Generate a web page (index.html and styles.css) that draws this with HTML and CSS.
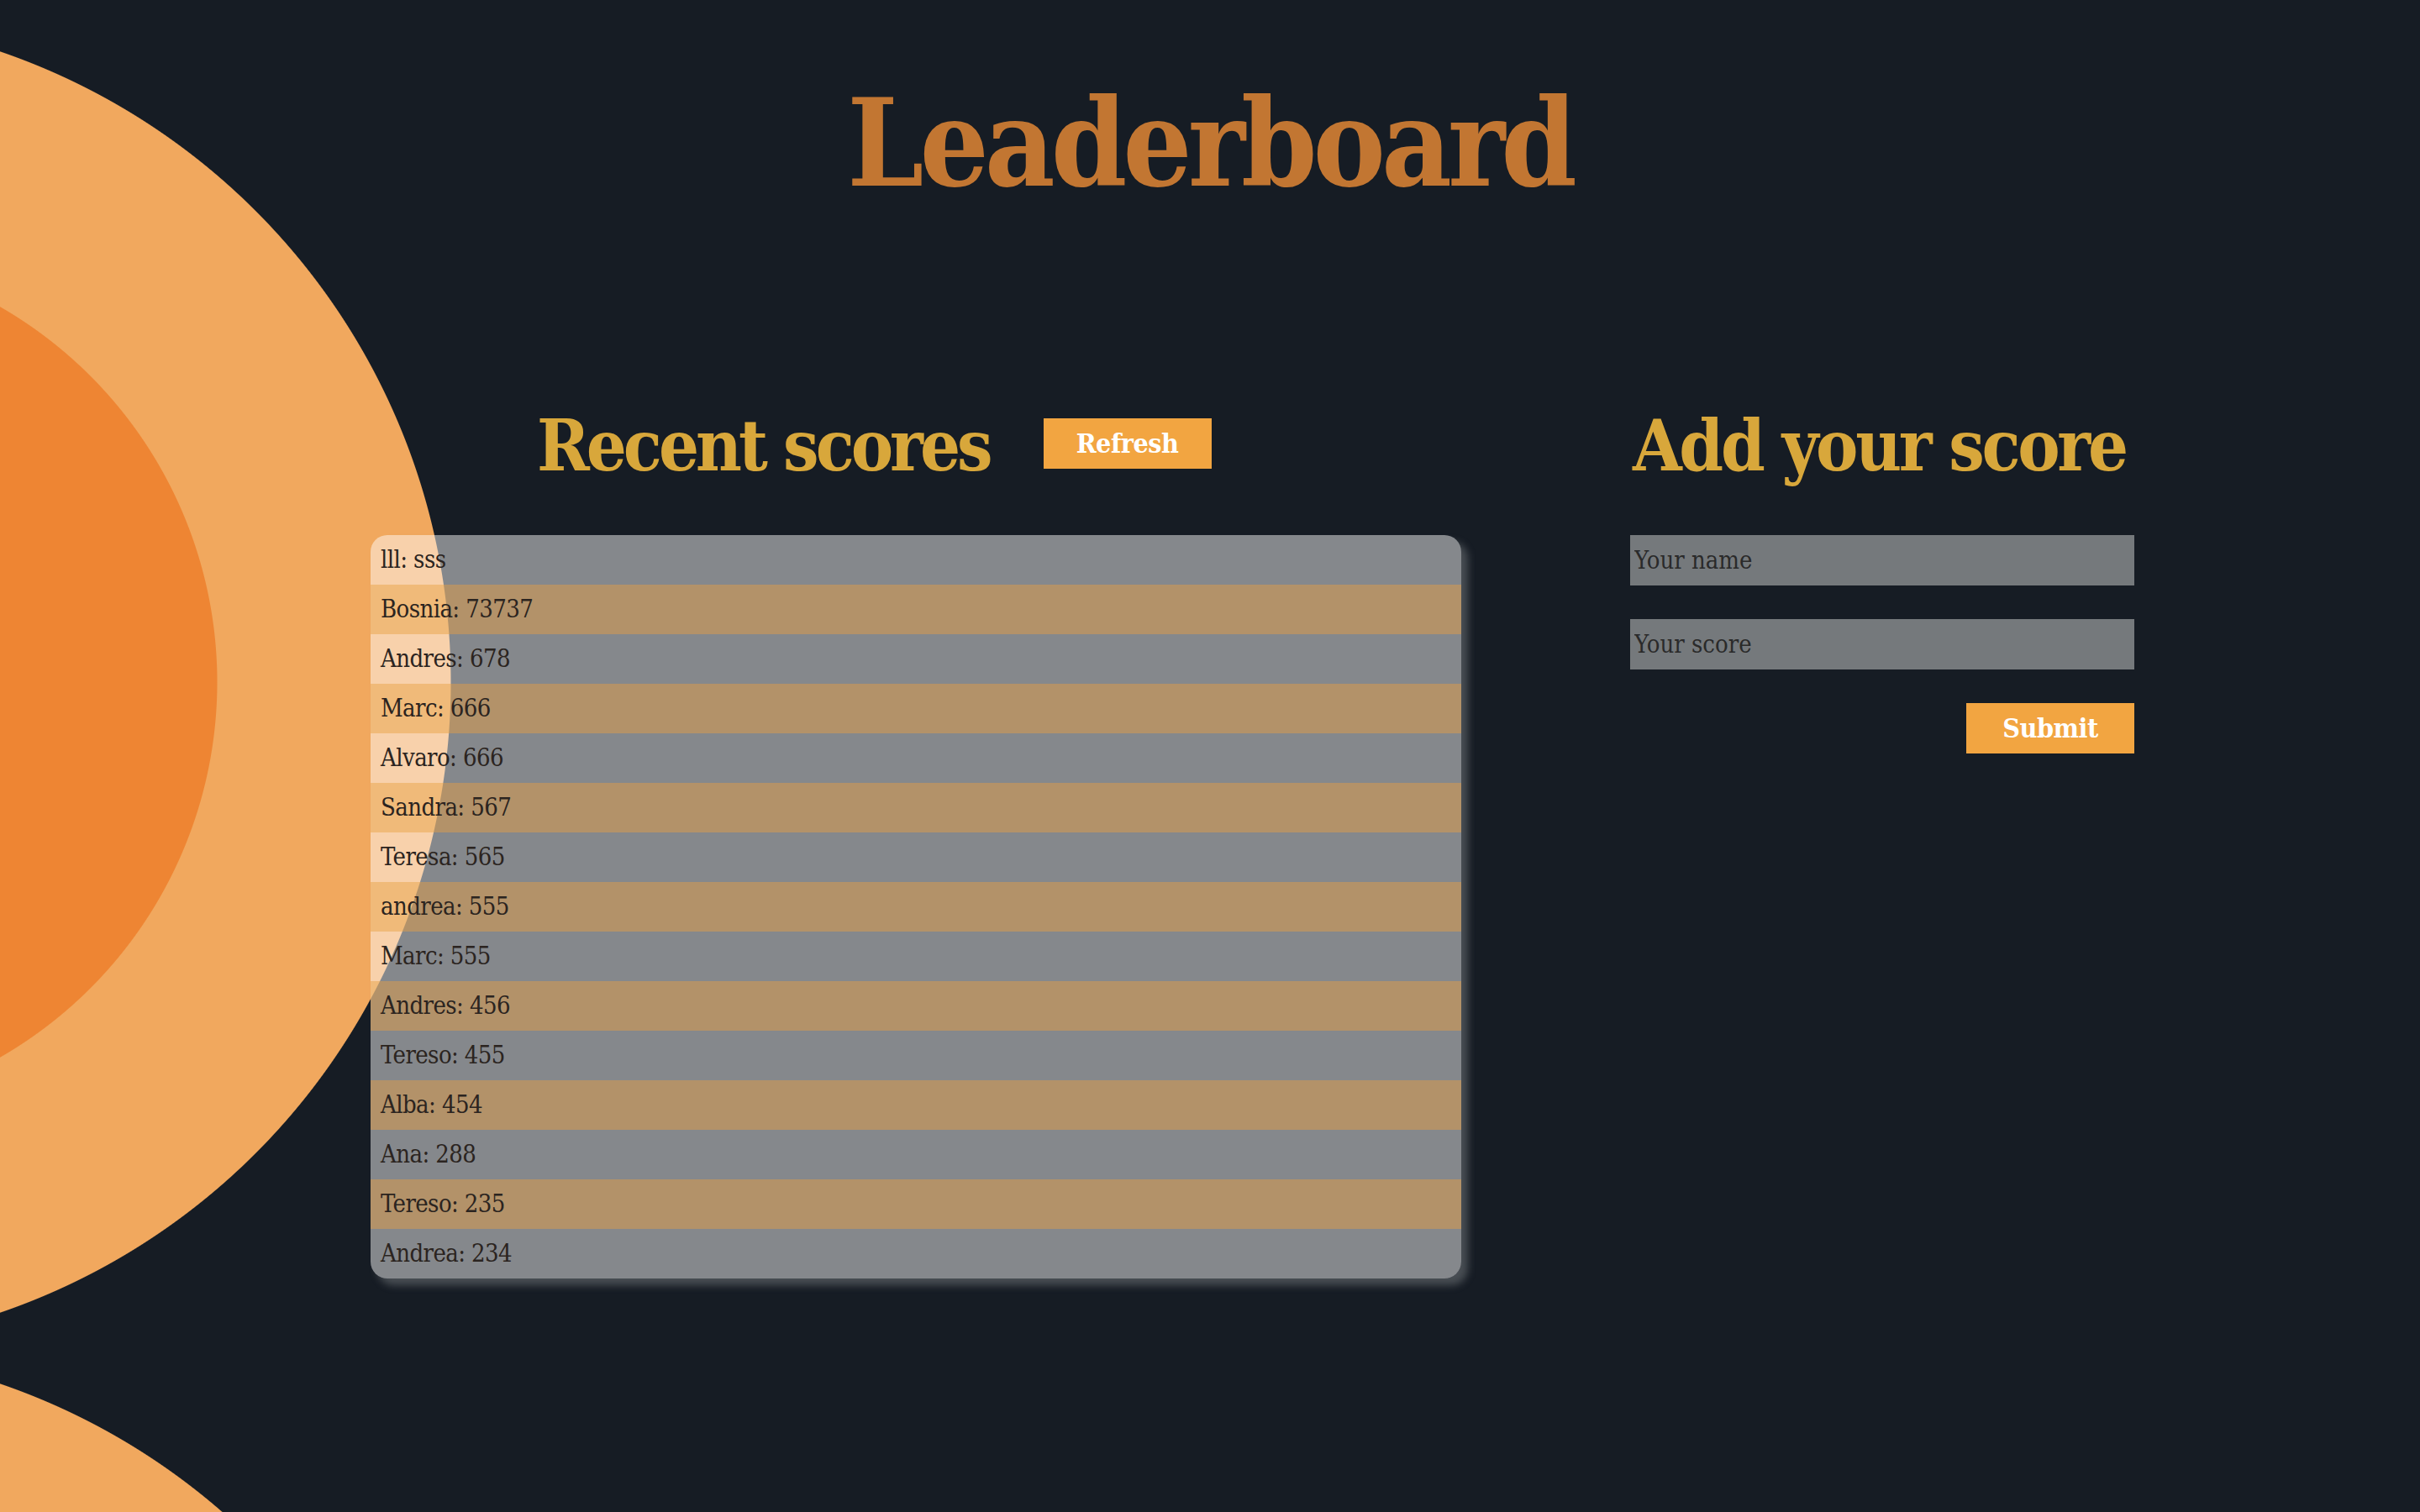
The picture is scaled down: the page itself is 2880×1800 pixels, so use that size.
FILE: index.html
```html
<!DOCTYPE html>
<html lang="en">
<head>
    <meta charset="UTF-8">
    <meta name="viewport" content="width=device-width, initial-scale=1.0">
    <title>Leaderboard</title>
    <link rel="stylesheet" href="styles.css">
</head>
<body>
    <h1 class="title">Leaderboard</h1>

    <main class="board">
        <!-- 最近的分数 -->
        <section class="recent">
            <div class="recent_head">
                <h2 class="sub_title">Recent scores</h2>
                <button class="btn" type="button">Refresh</button>
            </div>
            <ul class="scores">
                <li>lll: sss</li>
                <li>Bosnia: 73737</li>
                <li>Andres: 678</li>
                <li>Marc: 666</li>
                <li>Alvaro: 666</li>
                <li>Sandra: 567</li>
                <li>Teresa: 565</li>
                <li>andrea: 555</li>
                <li>Marc: 555</li>
                <li>Andres: 456</li>
                <li>Tereso: 455</li>
                <li>Alba: 454</li>
                <li>Ana: 288</li>
                <li>Tereso: 235</li>
                <li>Andrea: 234</li>
            </ul>
        </section>

        <!-- 添加分数 -->
        <section class="add">
            <h2 class="sub_title add_title">Add your score</h2>
            <form class="score_form">
                <input class="field" type="text" placeholder="Your name">
                <input class="field" type="text" placeholder="Your score">
                <button class="btn" type="button">Submit</button>
            </form>
        </section>
    </main>
</body>
</html>
```

FILE: styles.css
```css
*{
    margin:0;
    padding:0;
    box-sizing: border-box;
}
html,body{
    width:100%;
    height:100vh;
}
body{
    font-family: "DejaVu Serif Condensed", "DejaVu Serif", serif;
    font-stretch: condensed;
    color: #2b2420;
    background-color: #161c24;
    /* 左侧的两个橙色圆 */
    background-image:
        radial-gradient(circle 794px at -257px 812px, #ee8533 515px, #f1a85e 516px 793px, transparent 794px),
        radial-gradient(circle 794px at -257px 2398px, #ee8533 515px, #f1a85e 516px 793px, transparent 794px);
    background-repeat: no-repeat;
    overflow: hidden;
}

.title{
    margin-top: 99px;
    font-size: 144px;
    line-height: 1;
    letter-spacing: -5px;
    text-align: center;
    color: #c27632;
}

.board{
    display: flex;
    flex-flow: row nowrap;
    margin-top: 246px;
    padding-left: 441px;
    gap: 201px;
}

.sub_title{
    font-size: 84px;
    line-height: 1;
    letter-spacing: -4px;
    white-space: nowrap;
    color: #d8a73b;
}

.recent_head{
    display: flex;
    align-items: flex-start;
    gap: 64px;
    padding-left: 198px;
    margin-bottom: 64px;
}
.recent_head .btn{
    margin-top: 9px;
}

.btn{
    width: 200px;
    height: 60px;
    border: none;
    background: #f2a541;
    color: #fff;
    font-family: inherit;
    font-stretch: condensed;
    font-weight: bold;
    font-size: 32px;
    letter-spacing: -0.5px;
    cursor: pointer;
}

.scores{
    width: 1298px;
    list-style: none;
    border-radius: 20px;
    overflow: hidden;
    box-shadow: 8px 8px 10px rgba(135,139,142,0.45);
}
.scores li{
    height: 59px;
    line-height: 59px;
    padding-left: 12px;
    font-size: 29px;
    letter-spacing: -0.6px;
    background: rgba(255,255,255,0.48);
}
.scores li:nth-child(even){
    background: rgba(240,193,132,0.72);
}

.add{
    width: 600px;
}
.add_title{
    margin-bottom: 64px;
    padding-left: 3px;
    letter-spacing: -3.3px;
}
.score_form{
    display: flex;
    flex-flow: column nowrap;
    align-items: flex-end;
    gap: 40px;
}
.field{
    width: 600px;
    height: 60px;
    border: none;
    outline: none;
    padding: 0 5px;
    background: #75797c;
    font-family: inherit;
    font-stretch: condensed;
    font-size: 29px;
    color: #2a2a2a;
}
.field::placeholder{
    color: #2a2a2a;
}
```
